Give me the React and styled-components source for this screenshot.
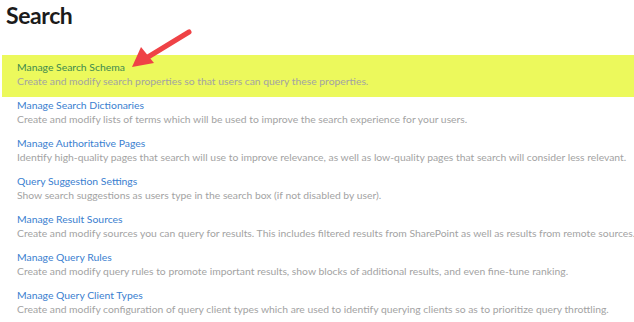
import React from "react";
import styled, { createGlobalStyle } from "styled-components";

const items = [
  {
    title: "Manage Search Schema",
    desc: "Create and modify search properties so that users can query these properties.",
    highlight: true,
  },
  {
    title: "Manage Search Dictionaries",
    desc: "Create and modify lists of terms which will be used to improve the search experience for your users.",
  },
  {
    title: "Manage Authoritative Pages",
    desc: "Identify high-quality pages that search will use to improve relevance, as well as low-quality pages that search will consider less relevant.",
  },
  {
    title: "Query Suggestion Settings",
    desc: "Show search suggestions as users type in the search box (if not disabled by user).",
  },
  {
    title: "Manage Result Sources",
    desc: "Create and modify sources you can query for results. This includes filtered results from SharePoint as well as results from remote sources.",
  },
  {
    title: "Manage Query Rules",
    desc: "Create and modify query rules to promote important results, show blocks of additional results, and even fine-tune ranking.",
  },
  {
    title: "Manage Query Client Types",
    desc: "Create and modify configuration of query client types which are used to identify querying clients so as to prioritize query throttling.",
  },
];

const App = () => {
  return (
    <>
      <GlobalStyle />
      <Page>
        <Heading>Search</Heading>
        <List>
          {items.map((item) => (
            <Item key={item.title} $highlight={item.highlight}>
              <Title $highlight={item.highlight}>{item.title}</Title>
              <Desc>{item.desc}</Desc>
              {item.highlight && (
                <Arrow viewBox="0 0 70 50" width="70" height="50">
                  <line
                    x1="63"
                    y1="6"
                    x2="22"
                    y2="31"
                    stroke="#ef4246"
                    strokeWidth="5"
                    strokeLinecap="round"
                  />
                  <polygon points="6,41 15,21 28,37" fill="#ef4246" />
                </Arrow>
              )}
            </Item>
          ))}
        </List>
      </Page>
    </>
  );
};

const GlobalStyle = createGlobalStyle`
  html, body {
    margin: 0;
    padding: 0;
    background: #ffffff;
  }
  body {
    font-family: "Lato", "Open Sans", sans-serif;
    overflow: hidden;
  }
`;

const Page = styled.div`
  width: 634px;
  height: 322px;
  overflow: hidden;
  background: #ffffff;
`;

const Heading = styled.h1`
  margin: 0;
  padding: 1px 0 0 6px;
  height: 55px;
  box-sizing: border-box;
  font-family: "Lato", sans-serif;
  font-size: 23px;
  font-weight: 700;
  letter-spacing: -0.4px;
  color: #1b1b1b;
  line-height: 28px;
`;

const List = styled.div`
  display: flex;
  flex-direction: column;
`;

const Item = styled.div`
  position: relative;
  padding: ${({ $highlight }) => ($highlight ? "5px 0 9px 15px" : "1px 0 9px 17px")};
  margin-left: ${({ $highlight }) => ($highlight ? "2px" : "0")};
  background: ${({ $highlight }) => ($highlight ? "#ecf95c" : "transparent")};
  white-space: nowrap;
`;

const Title = styled.div`
  font-size: 10.4px;
  line-height: 14px;
  color: ${({ $highlight }) => ($highlight ? "#3d8a4e" : "#3a80d0")};
`;

const Desc = styled.div`
  font-size: 10.35px;
  line-height: 14px;
  color: #a3a3a3;
`;

const Arrow = styled.svg`
  position: absolute;
  left: 124px;
  top: -29px;
`;

export default App;
